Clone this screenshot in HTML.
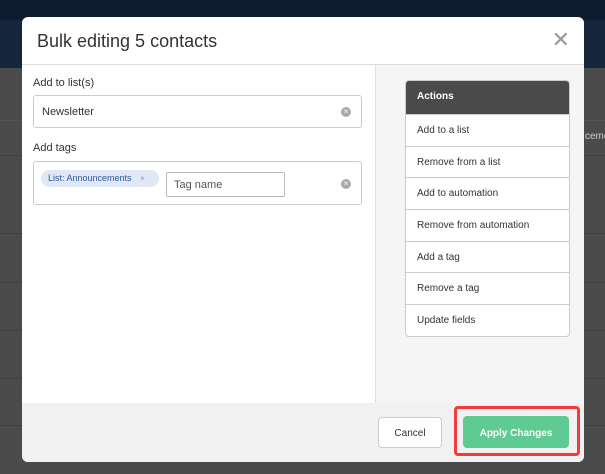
<!DOCTYPE html>
<html><head><style>
*{box-sizing:border-box;margin:0;padding:0}
body{width:605px;height:474px;overflow:hidden;background:#4b4b4b;font-family:"Liberation Sans",sans-serif;position:relative}
.top{position:absolute;left:0;top:0;width:605px;height:20px;background:#0e1a2d}
.nav{position:absolute;left:0;top:20px;width:605px;height:48px;background:#15263d}
.line{position:absolute;left:0;width:605px;height:1px;background:#404040}
.modal{position:absolute;left:22px;top:17px;width:562px;height:445px;background:#fff;border-radius:6px;overflow:hidden}
.hdr{height:48px;border-bottom:1px solid #ddd;position:relative}
.hdr h1{position:absolute;left:15px;top:14px;font-size:18px;font-weight:normal;color:#333}
.x{position:absolute;right:14px;top:10px;font-size:22px;color:#999}
.left{position:absolute;left:0;top:48px;width:353px;height:338px}
.right{position:absolute;left:353px;top:48px;width:209px;height:338px;background:#f5f5f5;border-left:1px solid #e0e0e0}
.lbl{position:absolute;left:11px;font-size:11px;color:#333}
.inp{position:absolute;left:11px;width:329px;border:1px solid #ccc;border-radius:3px;background:#fff}
.clr{position:absolute;right:10px;width:10px;height:10px;border-radius:50%;background:#aaa;color:#fff;font-size:8px;line-height:10px;text-align:center}
.foot{position:absolute;left:0;top:386px;width:562px;height:59px;background:#f1f1f1}
.acts{position:absolute;left:29px;top:15px;width:165px;border:1px solid #ccc;border-radius:4px;background:#fff;overflow:hidden}
.acts div{height:31.7px;line-height:31px;padding-left:11px;font-size:10px;color:#333;border-top:1px solid #ccc}
.acts div.h{background:#4a4a4a;color:#fff;font-weight:bold;border:none;height:33px}
</style></head><body>
<div class="top"></div><div class="nav"></div>
<div class="line" style="top:120px;background:#555"></div>
<div class="line" style="top:155px"></div>
<div class="line" style="top:233px"></div>
<div class="line" style="top:282px"></div>
<div class="line" style="top:330px"></div>
<div class="line" style="top:378px"></div>
<div class="line" style="top:425px"></div>
<div style="position:absolute;left:585px;top:131px;font-size:10px;color:#ccc">ceme</div>
<div class="modal">
 <div class="hdr"><h1>Bulk editing 5 contacts</h1><div class="x">✕</div></div>
 <div class="left">
  <div class="lbl" style="top:12px">Add to list(s)</div>
  <div class="inp" style="top:30px;height:33px"><span style="position:absolute;left:8px;top:10px;font-size:11px;color:#333">Newsletter</span><span class="clr" style="top:11px">×</span></div>
  <div class="lbl" style="top:77px">Add tags</div>
  <div class="inp" style="top:96px;height:44px">
   <span style="position:absolute;left:7px;top:8px;height:17px;width:118px;background:#dfe8f5;border-radius:9px;font-size:9px;color:#2d5aa0;line-height:17px;padding-left:7px">List: Announcements <span style="color:#999;margin-left:6px;font-size:8px">×</span></span>
   <span style="position:absolute;left:132px;top:10px;width:119px;height:25px;border:1px solid #bbb;border-radius:2px;font-size:11px;color:#555;padding:6px 7px">Tag name</span>
   <span class="clr" style="top:17px">×</span>
  </div>
 </div>
 <div class="right">
  <div class="acts">
   <div class="h">Actions</div>
   <div>Add to a list</div><div>Remove from a list</div><div>Add to automation</div><div>Remove from automation</div><div>Add a tag</div><div>Remove a tag</div><div>Update fields</div>
  </div>
 </div>
 <div class="foot">
  <div style="position:absolute;left:356px;top:14px;width:64px;height:31px;background:#fff;border:1px solid #ccc;border-radius:4px;font-size:10px;color:#333;text-align:center;line-height:31px">Cancel</div>
  <div style="position:absolute;left:432px;top:3px;width:126px;height:50px;border:3px solid #f03c3c;border-radius:4px"></div>
  <div style="position:absolute;left:441px;top:13px;width:106px;height:32px;background:#5fcb92;border-radius:4px;font-size:10px;font-weight:bold;color:#fff;text-align:center;line-height:35px">Apply Changes</div>
 </div>
</div>
</body></html>
